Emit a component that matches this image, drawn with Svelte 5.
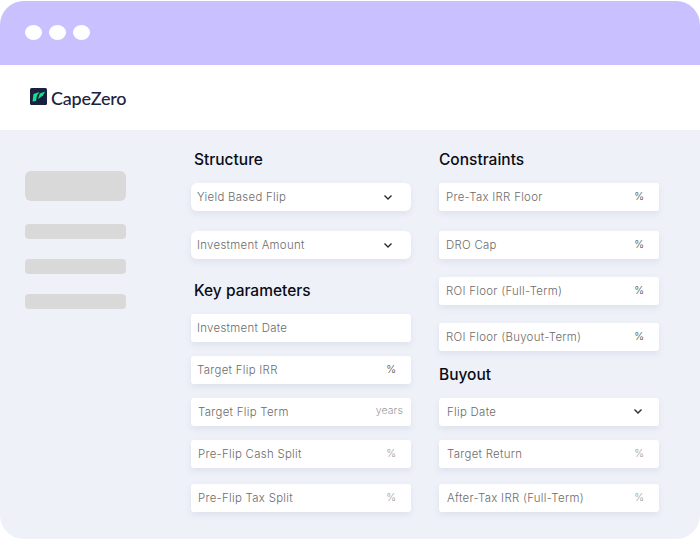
<script>
  const structure = [
    { label: "Yield Based Flip", kind: "select" },
    { label: "Investment Amount", kind: "select" }
  ];
  const params = [
    { label: "Investment Date" },
    { label: "Target Flip IRR", unit: "%", dark: true },
    { label: "Target Flip Term", unit: "years", inset: true },
    { label: "Pre-Flip Cash Split", unit: "%", inset: true },
    { label: "Pre-Flip Tax Split", unit: "%", inset: true, wide: true }
  ];
  const constraints = [
    { label: "Pre-Tax IRR Floor", unit: "%", dark: true },
    { label: "DRO Cap", unit: "%", dark: true, wide: true },
    { label: "ROI Floor (Full-Term)", unit: "%", dark: true },
    { label: "ROI Floor (Buyout-Term)", unit: "%", dark: true }
  ];
  const buyout = [
    { label: "Flip Date", kind: "select", inset: true },
    { label: "Target Return", unit: "%", inset: true },
    { label: "After-Tax IRR (Full-Term)", unit: "%", inset: true, wide: true }
  ];
</script>

{#snippet field(f, round)}
  <div class="field" class:inset={f.inset} class:round>
    <span>{f.label}</span>
    {#if f.kind === "select"}
      <svg class="chev" width="10" height="7" viewBox="0 0 10 7">
        <path d="M1.5 1.5 5 5 8.5 1.5" fill="none" stroke="#2b2b33" stroke-width="1.4" />
      </svg>
    {:else if f.unit === "%"}
      <span class="pct" class:dark={f.dark}>%</span>
    {:else if f.unit}
      <span class="years">{f.unit}</span>
    {/if}
  </div>
{/snippet}

<div class="window">
  <div class="titlebar">
    <i></i><i></i><i></i>
  </div>
  <div class="brand">
    <svg width="17" height="17" viewBox="0 0 17 17">
      <rect width="17" height="17" rx="1.5" fill="#1a2040" />
      <path d="M2.5 13.5 3.5 6 9.5 4 7 7.5 6 13Z" fill="#17e08c" />
      <path d="M8 11 9.8 5.5 15 3.5 13 7.5Z" fill="#17e08c" />
    </svg>
    <span class="name">CapeZero</span>
  </div>
  <div class="body">
    <aside>
      <div class="ph big"></div>
      <div class="ph"></div>
      <div class="ph"></div>
      <div class="ph"></div>
    </aside>
    <section class="col">
      <h2>Structure</h2>
      <div class="stack loose">
        {#each structure as f}{@render field(f, true)}{/each}
      </div>
      <h2 class="next">Key parameters</h2>
      <div class="stack">
        {#each params as f}
          <div class:after-wide={f.wide}>{@render field(f, false)}</div>
        {/each}
      </div>
    </section>
    <section class="col right">
      <h2>Constraints</h2>
      <div class="stack mid">
        {#each constraints as f}
          <div class:after-wide={f.wide}>{@render field(f, false)}</div>
        {/each}
      </div>
      <h2 class="next buy">Buyout</h2>
      <div class="stack">
        {#each buyout as f}
          <div class:after-wide={f.wide}>{@render field(f, false)}</div>
        {/each}
      </div>
    </section>
  </div>
</div>

<style>
  :global(body) {
    margin: 0;
    background: #fff;
  }

  .window {
    width: 700px;
    height: 538px;
    margin-top: 1px;
    border-radius: 24px;
    overflow: hidden;
    background: #eef1f8;
    font-family: Inter, "Open Sans", sans-serif;
  }

  .titlebar {
    height: 64px;
    background: #c9c1ff;
    display: flex;
    align-items: center;
    gap: 7px;
    padding-left: 25px;
    padding-bottom: 2px;
    box-sizing: border-box;
  }

  .titlebar i {
    width: 17px;
    height: 15px;
    border-radius: 50%;
    background: #fff;
  }

  .brand {
    height: 65px;
    background: #fff;
    display: flex;
    align-items: center;
    gap: 4px;
    padding-left: 30px;
    box-sizing: border-box;
  }

  .brand svg {
    margin-bottom: 3px;
  }

  .name {
    font-family: Lato, sans-serif;
    font-size: 18px;
    font-weight: 500;
    color: #1d2240;
    letter-spacing: -0.2px;
  }

  .body {
    display: flex;
    padding-left: 25px;
  }

  aside {
    width: 101px;
    margin-right: 65px;
    padding-top: 41px;
  }

  .ph {
    height: 15px;
    border-radius: 4px;
    background: #d9d9d9;
    margin-bottom: 20px;
  }

  .ph.big {
    height: 30px;
    border-radius: 6px;
    margin-bottom: 23px;
  }

  .col {
    width: 220px;
    margin-right: 28px;
    padding-top: 19px;
  }

  h2 {
    margin: 0 0 13px 3px;
    height: 21px;
    font-size: 15.5px;
    line-height: 21px;
    font-weight: 500;
    color: #0b0b14;
    letter-spacing: 0;
  }

  .right h2 {
    margin-left: 0;
  }

  h2.next {
    margin-top: 21px;
    margin-bottom: 13px;
  }

  h2.buy {
    margin-top: 13px;
  }

  .stack {
    display: flex;
    flex-direction: column;
    gap: 14px;
  }

  .stack.loose {
    gap: 20px;
  }

  .stack.mid {
    gap: 18px;
  }

  .stack .after-wide {
    margin-top: 2px;
  }

  .field {
    height: 28px;
    background: #fff;
    border-radius: 3px;
    box-shadow: 0 3px 6px rgba(90, 100, 140, 0.1);
    display: flex;
    align-items: center;
    justify-content: space-between;
    padding: 0 8px 0 6px;
    box-sizing: border-box;
    font-size: 11.4px;
    font-weight: 300;
    color: #6c6c6c;
    letter-spacing: 0.3px;
    position: relative;
  }

  .right .field {
    padding-left: 7px;
  }

  .field.round {
    border-radius: 6px;
  }

  .field.inset {
    padding-left: 7px;
  }

  .right .field.inset {
    padding-left: 8px;
  }

  .chev {
    position: absolute;
    right: 18px;
    top: 11px;
  }

  .right .chev {
    right: 16px;
    top: 10px;
  }

  .pct {
    position: absolute;
    right: 15px;
    top: 7px;
    font-size: 10.5px;
    letter-spacing: 0;
    color: #999;
  }

  .pct.dark {
    color: #444;
  }

  .years {
    font-size: 10.5px;
    color: #999;
    letter-spacing: 0.1px;
    margin-bottom: 3px;
  }
</style>
